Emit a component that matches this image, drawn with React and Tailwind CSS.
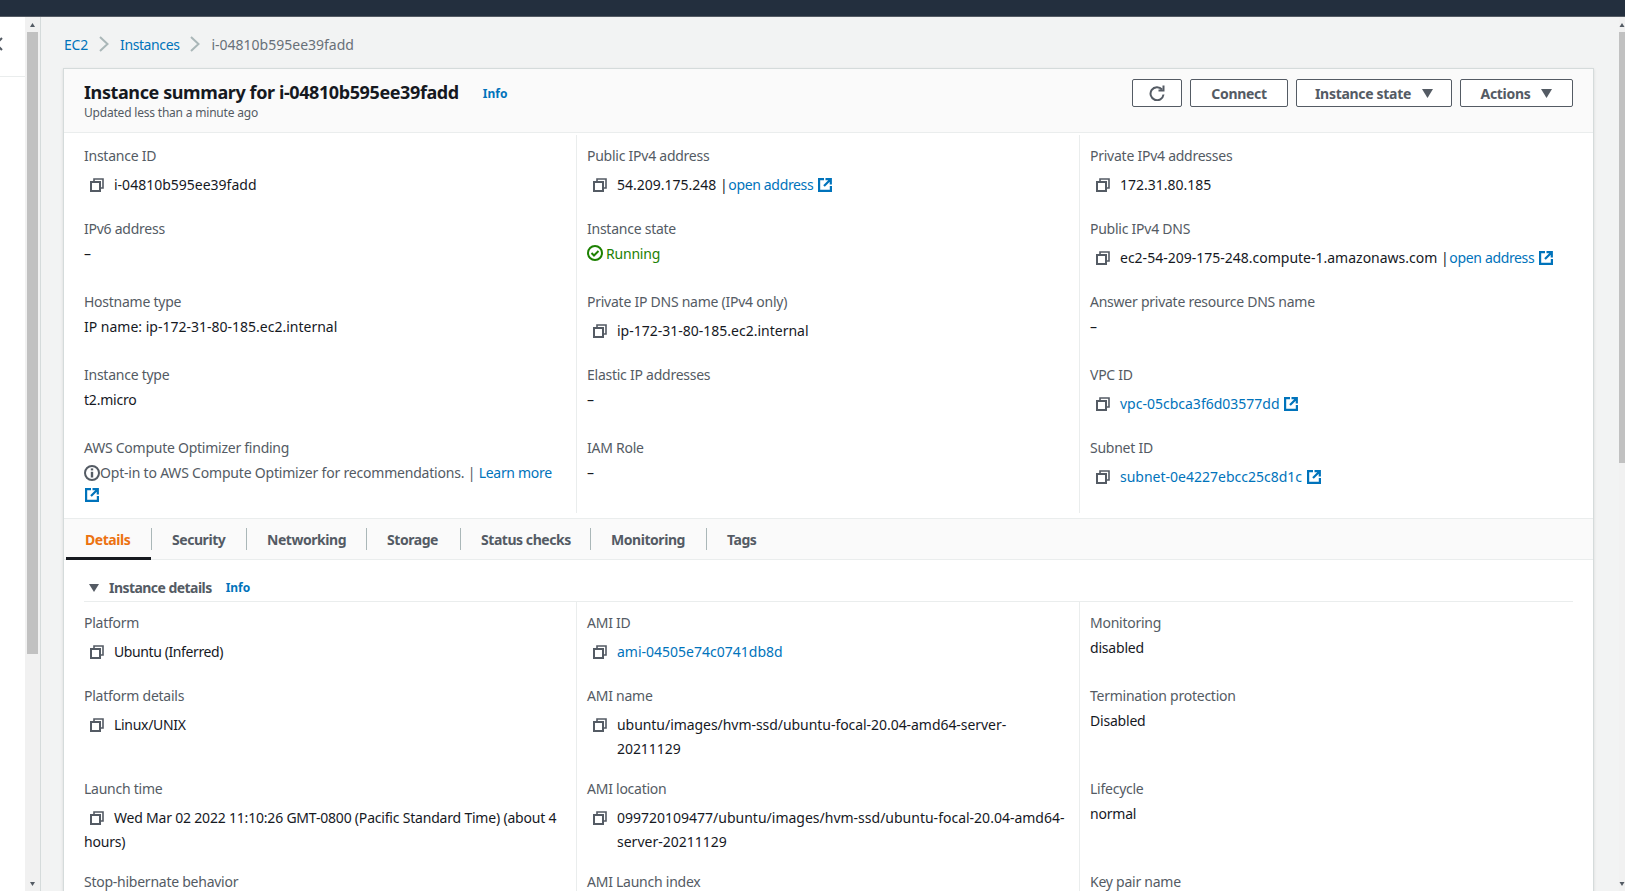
import React from 'react';

const CopyIcon = () => (
  <svg viewBox="0 0 14 14" className="w-[14px] h-[14px] shrink-0" fill="none" stroke="#545b64" strokeWidth="2">
    <path d="M1 4h9v9H1z" />
    <path d="M4 3.5V1h9v9h-2.5" strokeWidth="1.6" />
  </svg>
);

const ExternalIcon = () => (
  <svg viewBox="0 0 14 14" className="inline-block w-[14px] h-[14px] align-[-2px] ml-px" fill="none" stroke="#0073bb" strokeWidth="2.2">
    <path d="M6 1.1H1.1v11.8h11.8V8" />
    <path d="M7.5 1.2h5.3v5.3M12.5 1.5 6 8" />
  </svg>
);

const Caret = ({ className }) => (
  <svg viewBox="0 0 10 8" className={className} fill="#545b64">
    <path d="M0 0h10L5 8z" />
  </svg>
);

const Chevron = () => (
  <svg viewBox="0 0 10 16" className="w-[10px] h-[16px] mx-[11px]" fill="none" stroke="#aab7b8" strokeWidth="2">
    <path d="M1 1l7.5 7L1 15" />
  </svg>
);

const Link = ({ children, className = '' }) => <span className={`text-[#0073bb] ${className}`}>{children}</span>;

const Label = ({ children }) => <div className="h-[22px] leading-[22px] text-[#545b64] tracking-[-0.25px]">{children}</div>;

// value with a copy icon in front, second lines stay indented
const CopyValue = ({ children, className = 'tracking-normal' }) => (
  <div className={`flex mt-[6px] leading-[24px] pl-[6px] gap-[10px] ${className}`}>
    <span className="h-[24px] flex items-center"><CopyIcon /></span>
    <div>{children}</div>
  </div>
);

const Plain = ({ children, className = '' }) => <div className={`mt-[2px] leading-[24px] ${className}`}>{children}</div>;

const Cell = ({ col, label, children }) => {
  const pad = col === 0 ? 'pl-[20px] pr-[10px] border-r border-[#eaeded]' : col === 1 ? 'pl-[10px] pr-[10px] border-r border-[#eaeded]' : 'pl-[10px] pr-[20px]';
  return (
    <div className={`${pad} pt-[10px] pb-[7px] min-h-[73px]`}>
      <Label>{label}</Label>
      {children}
    </div>
  );
};

const Address = () => (
  <>
    {' | '}<Link className="tracking-[-0.35px] -ml-[3px]">open address</Link> <ExternalIcon />
  </>
);

const tabs = [
  { name: 'Details', w: 'w-[87px]' },
  { name: 'Security', w: 'w-[95px]' },
  { name: 'Networking', w: 'w-[120px]' },
  { name: 'Storage', w: 'w-[94px]' },
  { name: 'Status checks', w: 'w-[130px]' },
  { name: 'Monitoring', w: 'w-[116px]' },
  { name: 'Tags', w: 'w-[80px]' },
];

const Scrollbar = ({ thumb }) => (
  <div className="h-full w-full bg-[#f1f1f1] flex flex-col items-center">
    <div className="h-[15px] w-full flex items-center justify-center">
      <Caret className="w-[7px] h-[4px] rotate-180" />
    </div>
    <div className={`${thumb} bg-[#c1c1c1]`} />
    <div className="flex-1" />
    <div className="h-[15px] w-full flex items-center justify-center">
      <Caret className="w-[7px] h-[4px]" />
    </div>
  </div>
);

export default function App() {
  return (
    <div className="h-[891px] w-[1625px] overflow-hidden flex flex-col bg-white text-[14px] tracking-[-0.2px] text-[#16191f] font-['Noto_Sans',sans-serif]">
      <div className="h-[17px] shrink-0 bg-[#232f3e] border-b border-[#545b64]" />
      <div className="flex flex-1 min-h-0">
        {/* side nav, only the edge of it is visible */}
        <div className="w-[25px] shrink-0 bg-white">
          <div className="h-[60px] border-b border-[#eaeded] flex items-center">
            <svg viewBox="0 0 14 14" className="w-[14px] h-[14px] -ml-[11px] mb-[6px]" fill="none" stroke="#545b64" strokeWidth="2">
              <path d="M1 1l12 12M13 1 1 13" />
            </svg>
          </div>
        </div>
        <div className="w-[15px] shrink-0">
          <Scrollbar thumb="h-[622px] w-[11px]" />
        </div>
        <div className="w-px shrink-0 bg-[#d5dbdb]" />

        <div className="flex-1 min-w-0 bg-[#f2f3f3] pl-[22px] pr-[25px]">
          <div className="flex items-center h-[51px] pt-[3px] pl-px">
            <Link>EC2</Link>
            <Chevron />
            <Link className="tracking-[-0.4px]">Instances</Link>
            <Chevron />
            <span className="text-[#687078] tracking-normal">i-04810b595ee39fadd</span>
          </div>

          <div className="bg-white border-l border-r border-t border-[#d5dbdb] shadow-sm">
            <div className="h-[64px] bg-[#fafafa] border-b border-[#eaeded] flex justify-between pl-[20px] pr-[20px]">
              <div className="pt-[9px]">
                <div className="flex items-center">
                  <span className="text-[18px] leading-[28px] font-bold tracking-[-0.4px]">Instance summary for i-04810b595ee39fadd</span>
                  <span className="ml-[24px] text-[12px] font-bold text-[#0073bb] mt-[4px] tracking-normal">Info</span>
                </div>
                <div className="text-[12px] leading-[16px] text-[#545b64] -mt-[1px]">Updated less than a minute ago</div>
              </div>
              <div className="flex gap-2 pt-[10px] text-[#545b64] font-bold tracking-[-0.3px]">
                <button className="w-[50px] h-[28px] bg-white border border-[#545b64] rounded-[2px] flex items-center justify-center">
                  <svg viewBox="0 0 16 16" className="w-[16px] h-[16px]" fill="none" stroke="#545b64" strokeWidth="2">
                    <path d="M13 4.5A6.5 6.5 0 1 0 14.5 9.5" />
                    <path d="M14.5 0.5V5.5H9.5" />
                  </svg>
                </button>
                <button className="w-[98px] h-[28px] bg-white border border-[#545b64] rounded-[2px]">Connect</button>
                <button className="w-[156px] h-[28px] bg-white border border-[#545b64] rounded-[2px] flex items-center justify-center gap-[11px]">
                  Instance state <Caret className="w-[11px] h-[9px]" />
                </button>
                <button className="w-[113px] h-[28px] bg-white border border-[#545b64] rounded-[2px] flex items-center justify-center gap-[11px]">
                  Actions <Caret className="w-[11px] h-[9px]" />
                </button>
              </div>
            </div>

            <div className="grid grid-cols-[513px_503px_1fr] mt-[2px]">
              <Cell col={0} label="Instance ID"><CopyValue>i-04810b595ee39fadd</CopyValue></Cell>
              <Cell col={1} label="Public IPv4 address"><CopyValue>54.209.175.248<Address /></CopyValue></Cell>
              <Cell col={2} label="Private IPv4 addresses"><CopyValue>172.31.80.185</CopyValue></Cell>

              <Cell col={0} label="IPv6 address"><Plain>–</Plain></Cell>
              <Cell col={1} label="Instance state">
                <div className="flex items-center gap-[3px] h-[22px] mt-[2px] text-[#1d8102]">
                  <svg viewBox="0 0 16 16" className="w-[16px] h-[16px]" fill="none" stroke="#1d8102" strokeWidth="2">
                    <circle cx="8" cy="8" r="7" />
                    <path d="M4.5 8l2.5 2.5 4.5-4.5" />
                  </svg>
                  Running
                </div>
              </Cell>
              <Cell col={2} label="Public IPv4 DNS"><CopyValue>ec2-54-209-175-248.compute-1.amazonaws.com<Address /></CopyValue></Cell>

              <Cell col={0} label="Hostname type"><Plain className="tracking-normal">IP name: ip-172-31-80-185.ec2.internal</Plain></Cell>
              <Cell col={1} label="Private IP DNS name (IPv4 only)"><CopyValue>ip-172-31-80-185.ec2.internal</CopyValue></Cell>
              <Cell col={2} label="Answer private resource DNS name"><Plain>–</Plain></Cell>

              <Cell col={0} label="Instance type"><Plain>t2.micro</Plain></Cell>
              <Cell col={1} label="Elastic IP addresses"><Plain>–</Plain></Cell>
              <Cell col={2} label="VPC ID"><CopyValue><Link>vpc-05cbca3f6d03577dd</Link> <ExternalIcon /></CopyValue></Cell>

              <Cell col={0} label="AWS Compute Optimizer finding">
                <div className="mt-[2px] leading-[24px] text-[#545b64] flex items-center">
                  <svg viewBox="0 0 16 16" className="w-[16px] h-[16px] shrink-0" fill="none" stroke="#545b64" strokeWidth="2">
                    <circle cx="8" cy="8" r="7" />
                    <path d="M8 6.8V12.5" strokeWidth="2.4" />
                    <path d="M8 3.4v2" strokeWidth="2.4" />
                  </svg>
                  <span>Opt-in to AWS Compute Optimizer for recommendations. | <Link className="tracking-[-0.3px]">Learn more</Link></span>
                </div>
                <div className="h-[19px] leading-[19px] mb-[2px]"><ExternalIcon /></div>
              </Cell>
              <Cell col={1} label="IAM Role"><Plain>–</Plain></Cell>
              <Cell col={2} label="Subnet ID"><CopyValue><Link>subnet-0e4227ebcc25c8d1c</Link> <ExternalIcon /></CopyValue></Cell>
            </div>

            <div className="mt-[5px] h-[42px] bg-[#fafafa] border-t border-b border-[#eaeded] flex pl-px font-bold text-[#545b64] tracking-[-0.45px]">
              {tabs.map((t, i) => (
                <div key={t.name} className={`${t.w} relative flex items-center pl-5 ${i === 0 ? 'text-[#ec7211]' : ''}`}>
                  {t.name}
                  {i < tabs.length - 1 && <span className="absolute right-0 top-[9px] h-[22px] w-px bg-[#aab7b8]" />}
                  {i === 0 && <span className="absolute left-[1px] right-px -bottom-px h-[3px] bg-[#16191f]" />}
                </div>
              ))}
            </div>

            <div className="mx-[20px] mt-[17px] h-[25px] pb-[3px] border-b border-[#eaeded] flex items-center font-bold text-[#545b64] tracking-[-0.55px]">
              <Caret className="w-[10px] h-[8px] ml-[5px] mr-[10px]" />
              Instance details
              <span className="ml-[14px] text-[12px] text-[#0073bb] tracking-normal">Info</span>
            </div>

            <div className="grid grid-cols-[513px_503px_1fr]">
              <Cell col={0} label="Platform"><CopyValue className="tracking-[-0.4px]">Ubuntu (Inferred)</CopyValue></Cell>
              <Cell col={1} label="AMI ID"><CopyValue><Link>ami-04505e74c0741db8d</Link></CopyValue></Cell>
              <Cell col={2} label="Monitoring"><Plain>disabled</Plain></Cell>

              <Cell col={0} label="Platform details"><CopyValue className="tracking-[-0.3px]">Linux/UNIX</CopyValue></Cell>
              <Cell col={1} label="AMI name"><CopyValue className="tracking-[-0.05px]">ubuntu/images/hvm-ssd/ubuntu-focal-20.04-amd64-server-<br />20211129</CopyValue></Cell>
              <Cell col={2} label="Termination protection"><Plain>Disabled</Plain></Cell>

              <Cell col={0} label="Launch time">
                <div className="mt-[6px] leading-[24px]">
                  <span className="inline-block ml-[6px] mr-[10px] align-[-2px]"><CopyIcon /></span>
                  Wed Mar 02 2022 11:10:26 GMT-0800 (Pacific Standard Time) (about 4<br />hours)
                </div>
              </Cell>
              <Cell col={1} label="AMI location"><CopyValue>099720109477/ubuntu/images/hvm-ssd/ubuntu-focal-20.04-amd64-<br />server-20211129</CopyValue></Cell>
              <Cell col={2} label="Lifecycle"><Plain>normal</Plain></Cell>

              {/* last row runs off the bottom of the window, only the labels show */}
              <Cell col={0} label="Stop-hibernate behavior" />
              <Cell col={1} label="AMI Launch index" />
              <Cell col={2} label="Key pair name" />
            </div>
          </div>
        </div>

        <div className="w-[6px] shrink-0">
          <Scrollbar thumb="h-[431px] w-full" />
        </div>
      </div>
    </div>
  );
}
